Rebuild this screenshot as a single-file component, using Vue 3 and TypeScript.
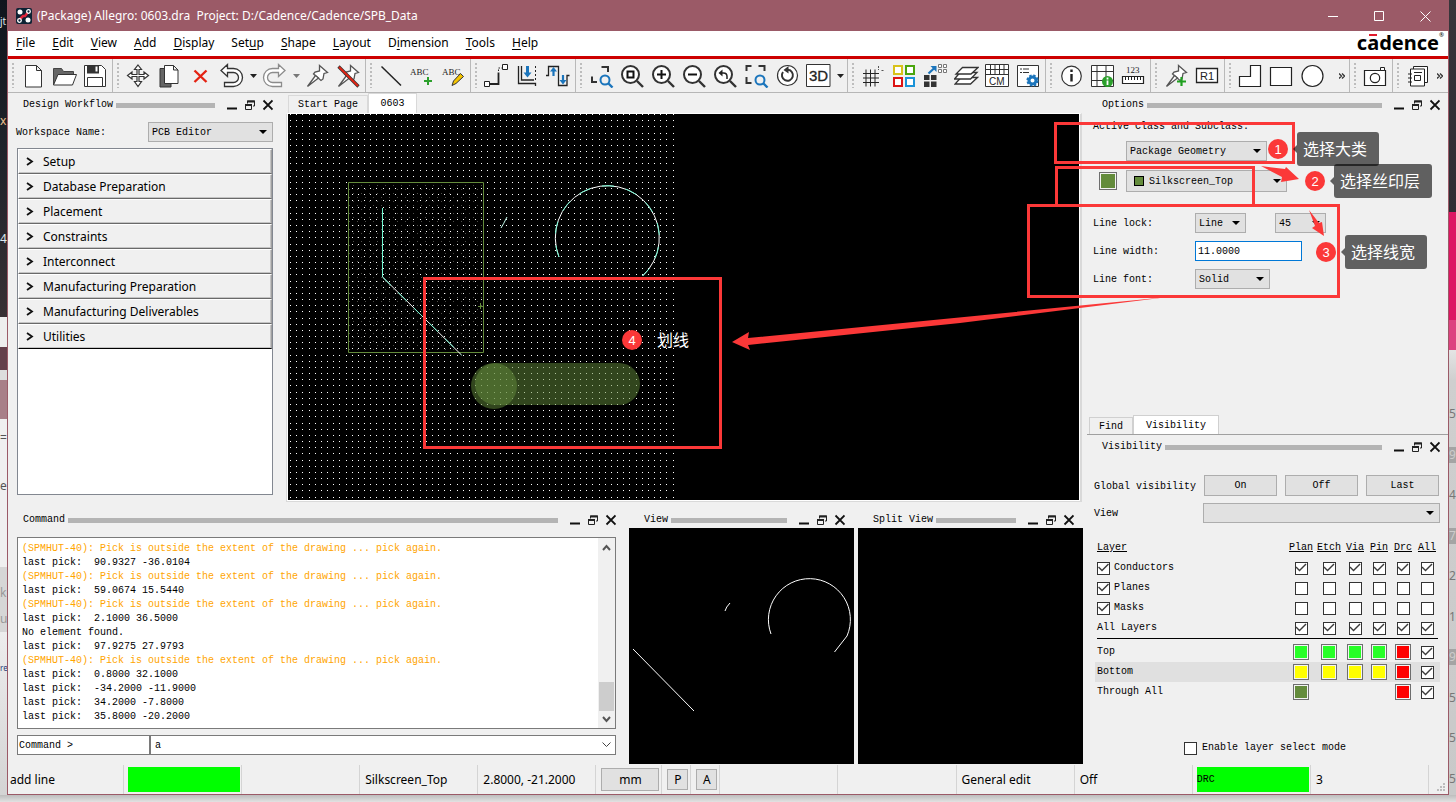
<script setup lang="ts">
import { ref } from 'vue'

interface ToolItem {
  kind: 'icon' | 'drop' | 'more'
  icon?: string
  label: string
}

interface LogLine {
  text: string
  warn?: boolean
}

const icon = (name: string, label: string): ToolItem => ({ kind: 'icon', icon: name, label })
const drop = (label: string): ToolItem => ({ kind: 'drop', label })
const more = (label: string): ToolItem => ({ kind: 'more', label })

const menus = ['File', 'Edit', 'View', 'Add', 'Display', 'Set|up', 'Shape', 'Layout', 'Dimension', 'Tools', 'Help'].map((m) => {
  if (m.includes('|')) {
    const [a, b] = m.split('|')
    return { pre: a, key: b[0], post: b.slice(1) }
  }
  if (m === 'Dimension') return { pre: 'D', key: 'i', post: 'mension' }
  return { pre: '', key: m[0], post: m.slice(1) }
})

const groups: ToolItem[][] = [
  [icon('file', 'New'), icon('open', 'Open'), icon('save', 'Save')],
  [icon('move', 'Move'), icon('copy', 'Copy'), icon('del', 'Delete'), icon('undo', 'Undo'), drop('Undo list'), icon('redo', 'Redo'), drop('Redo list'), icon('pin', 'Fix'), icon('unpin', 'Unfix')],
  [icon('line', 'Add line'), icon('text', 'Add text'), icon('editText', 'Edit text')],
  [icon('route', 'Connect'), icon('slide', 'Slide'), icon('delay', 'Delay tune')],
  [icon('zoomWin', 'Zoom by points'), icon('zoomFit', 'Zoom fit'), icon('zoomIn', 'Zoom in'), icon('zoomOut', 'Zoom out'), icon('zoomPrev', 'Zoom previous'), icon('zoomSel', 'Zoom selection'), icon('refresh', 'Redraw'), icon('threeD', '3D canvas'), drop('3D options')],
  [icon('grid', 'Grid'), icon('colors', 'Color'), icon('shadow', 'Shadow'), icon('layers', 'Cross section'), icon('cm', 'Constraint manager'), icon('prefs', 'Parameters')],
  [icon('info', 'Show element'), icon('report', 'Report'), icon('ruler', 'Measure')],
  [icon('addPin', 'Add pin'), icon('refdes', 'Reference designator')],
  [icon('poly', 'Shape polygon'), icon('rect', 'Rectangle'), icon('circle', 'Circle'), more('More shapes')],
  [icon('camera', 'Snapshot')],
  [icon('docs', 'Documents'), more('More tools')],
]

const lens = (inner: string) =>
  `<circle cx="10.5" cy="11.5" r="8.5" fill="#fff" stroke="#333" stroke-width="2"/><path d="M17 18l6 6" stroke="#333" stroke-width="2.4"/>${inner}`
const pinShape = (c: string) =>
  `<path d="M14.500 2.500l8 7-3.500 1-1 5.500-2 1.500-7.500-6.500 1.500-2 4.500-1z" fill="#fff" stroke="${c}" stroke-width="1.300"/><path d="M2.500 23.500l8-11 3 2.500z" stroke="${c}" stroke-width="1.300" fill="#fff"/>`
const blueLens =
  '<circle cx="16" cy="17" r="4.500" fill="none" stroke="#1b75bc" stroke-width="2"/><path d="M19.500 20.500l4 4" stroke="#1b75bc" stroke-width="2.400"/>'

const icons: Record<string, string> = {
  file: '<path d="M4.500 2.500h11l5 5v16.500h-16zM15.500 2.500v5h5" fill="#fff" stroke="#333"/>',
  open: '<path d="M1.500 22V5.500h8l2 3h10V13" fill="#666" stroke="#444"/><path d="M6 11.500h18.500l-4 10.500H1.500z" fill="#fff" stroke="#333"/>',
  save: '<path d="M1.500 2.500h17l4 4V23.500h-21z" fill="#fff" stroke="#333"/><path d="M4 2.500h12v8H4z" fill="#333"/><path d="M12.500 3.500h2v5h-2z" fill="#fff"/><path d="M4.500 14.500h15v9h-15z" fill="#fff" stroke="#333"/>',
  move: '<path d="M12 2l3.500 4.500h-2.500v5h5V9l4.500 3.500L18 16v-2.500h-5v5h2.500L12 23.500 8.500 18.500H11v-5H6V16l-4.500-3.500L6 9v2.500h5v-5H8.500z" fill="#fff" stroke="#333" stroke-width="1.200"/>',
  copy: '<path d="M3 5.500h11V24H3z" fill="#666" stroke="#333"/><path d="M7.500 2.500h9l4.500 4.500v13.500H7.500zM16.500 2.500V7H21" fill="#fff" stroke="#333"/>',
  del: '<path d="M6.500 7.500l12 11.500M18.500 7.500l-12 11.500" stroke="#e42313" stroke-width="2.400"/>',
  undo: '<path d="M8.500 1.500v4h6a8.700 8.700 0 0 1 0 18H5.500v-4h9a4.900 4.900 0 0 0 0-10h-6v4L2 7.500z" fill="#fff" stroke="#333" stroke-width="1.300"/>',
  redo: '<path d="M16.500 1.500v4h-6a8.700 8.700 0 0 0 0 18h9v-4h-9a4.900 4.900 0 0 1 0-10h6v4L23 7.500z" fill="#fff" stroke="#8c8c8c" stroke-width="1.300"/>',
  pin: pinShape('#555'),
  unpin: pinShape('#555') + '<path d="M2.500 3.500l20 20" stroke="#333" stroke-width="3.200"/><path d="M3 4l19 19" stroke="#e42313" stroke-width="1.800"/>',
  line: '<path d="M2.500 3.500l19.500 19" stroke="#222" stroke-width="1.500"/>',
  text: '<text x="0" y="12" font-family="Liberation Serif" font-size="9" fill="#222">ABC</text><path d="M18 14v8M14 18h8" stroke="#2ca02c" stroke-width="2"/>',
  editText: '<text x="1" y="12" font-family="Liberation Serif" font-size="9" fill="#222">ABC</text><path d="M11 22.500l1.500-4.500 7-7.500 3 3-7.500 7z" fill="#f5c400" stroke="#333"/>',
  route: '<path d="M.5 18.500h5v5h-5zM18.500 1.500h5v5h-5z" fill="#fff" stroke="#222"/><path d="M6 21h8.500V9.500" fill="none" stroke="#222" stroke-width="1.800"/><path d="M14.500 8V5H18" fill="none" stroke="#222" stroke-dasharray="1.500 1.500"/>',
  slide: '<path d="M3.500 3v17.500h17V23M6.500 3v14H19" fill="none" stroke="#222" stroke-width="1.300"/><path d="M20.500 3v15" stroke="#222" stroke-dasharray="2 2"/><path d="M12.500 3v8" stroke="#1b75bc" stroke-width="3"/><path d="M8.500 9.500h8l-4 5z" fill="#1b75bc"/>',
  delay: '<path d="M0 12.500h2.500v-9h10v19h8.500v-10h2.500" fill="none" stroke="#222" stroke-width="1.300"/><path d="M7.500 7v6M17 12v6" stroke="#1b75bc" stroke-width="2.200"/><path d="M4 8.500h7L7.500 4zM13.500 17h7L17 21.500z" fill="#1b75bc"/>',
  zoomWin: '<path d="M12.500 4H19v5M3 13.500V19h5" fill="none" stroke="#333" stroke-width="2"/>' + blueLens,
  zoomFit: lens('<path d="M7.500 8.500h6v6h-6z" fill="none" stroke="#111" stroke-width="2"/>'),
  zoomIn: lens('<path d="M10.500 7v9M6 11.500h9" stroke="#111" stroke-width="2"/>'),
  zoomOut: lens('<path d="M6 11.500h9" stroke="#111" stroke-width="2"/>'),
  zoomPrev: lens('<path d="M14 16v-2.500c0-2.500-1-3.500-3.500-3.500H8" fill="none" stroke="#222" stroke-width="1.500"/><path d="M9.500 6.500v7L5.500 10z" fill="#222"/>'),
  zoomSel: '<path d="M2.500 8V3h5M14.500 3h6v5M2.500 14v6h5" fill="none" stroke="#333" stroke-width="2"/>' + blueLens,
  refresh: '<circle cx="12.500" cy="12.500" r="10" fill="#fff" stroke="#333" stroke-width="1.200"/><path d="M8 9a5.500 5.500 0 1 0 5-2.200" fill="none" stroke="#333" stroke-width="2"/><path d="M13.500 3v7.500L8.500 7z" fill="#333"/>',
  threeD: '<path d="M.5 1.500h23.500v22H.5z" fill="#fff" stroke="#333"/><text x="3" y="18" font-family="Liberation Sans" font-size="15" fill="#222" stroke="#222" stroke-width=".300">3D</text>',
  grid: '<path d="M5 6.500v17M9.500 6.500v17M14 6.500v17M2 10.500h16M2 15h16M2 19.500h16" stroke="#222"/><path d="M17.500 3v4M20.500 7.500h3" stroke="#555" stroke-dasharray="2 1"/>',
  colors: '<g fill="#fff" stroke-width="2"><path d="M2 3h8v8H2z" stroke="#d8c21a"/><path d="M14 3h8v8h-8z" stroke="#4aa50d"/><path d="M2 15h8v8H2z" stroke="#dc1414"/><path d="M14 15h8v8h-8z" stroke="#1a93d8"/></g>',
  shadow: '<path d="M1 12h5.500v5H1zM8 12h5.500v5H8zM1 18.500h5.500v5.500H1zM8 18.500h5.500v5.500H8z" fill="#333"/><path d="M5.500 10.500l7-6.500" stroke="#1b75bc" stroke-width="2.200"/><path d="M7.500 3h6v6z" fill="#1b75bc"/><path d="M15.500 1.500h3v3h-3zM20.500 1.500h3v3h-3zM15.500 6.500h3v3h-3zM20.500 6.500h3v3h-3z" fill="#fff" stroke="#777"/>',
  layers: '<path d="M7 14.500h16.500l-7 6.500H1z" fill="#fff" stroke="#333" stroke-width="1.300"/><path d="M6 9.500h17l-6.500 6.500H.5z" fill="#fff" stroke="#333" stroke-width="1.300"/><path d="M8.500 4.500h15.500l-7 6.500H2z" fill="#fff" stroke="#333" stroke-width="1.300"/>',
  cm: '<path d="M.5 1.500h23v22H.5z" fill="#fff" stroke="#333"/><path d="M.5 6.500h23M.5 11.500h23M5.500 1.500v10M10 1.500v10M14.500 1.500v10M19 1.500v10" stroke="#333"/><text x="4" y="21.500" font-family="Liberation Sans" font-size="10" fill="#222">CM</text>',
  prefs: '<path d="M1.500 2.500h21v21h-21z" fill="#fff" stroke="#333"/><path d="M4 6h2M7 6h6M4 9.500h2M7 9.500h6" stroke="#333"/><circle cx="16.500" cy="17.500" r="3.500" fill="none" stroke="#1b75bc" stroke-width="3"/><circle cx="16.500" cy="17.500" r="5.200" fill="none" stroke="#1b75bc" stroke-width="1.800" stroke-dasharray="2.400 1.700"/>',
  info: '<circle cx="12.500" cy="13" r="9.800" fill="#fff" stroke="#333" stroke-width="1.200"/><path d="M12.500 11v7.500M12.500 6.500v2.500" stroke="#222" stroke-width="2.400"/>',
  report: '<path d="M1.500 2.500h22v21h-22z" fill="#fff" stroke="#333"/><path d="M1.500 8.500h22M1.500 17.500h22M7 2.500v21M16 2.500v21" stroke="#333"/><circle cx="17.500" cy="18.500" r="5.500" fill="#2ca02c"/><path d="M17.500 17.500v4.500M17.500 14.500v2" stroke="#fff" stroke-width="1.800"/>',
  ruler: '<text x="5" y="10" font-family="Liberation Serif" font-size="9" fill="#222">123</text><path d="M1.500 13.500h21v7h-21z" fill="#fff" stroke="#222" stroke-width="1.200"/><path d="M4.500 14v3M7.500 14v3M10.500 14v3M13.500 14v3M16.500 14v3M19.500 14v3" stroke="#222"/>',
  addPin: pinShape('#555') + '<path d="M17.500 14v9M13 18.500h9" stroke="#1fa01f" stroke-width="2.200"/>',
  refdes: '<path d="M1.500 5.500h21v14h-21z" fill="#fff" stroke="#222" stroke-width="1.300"/><text x="5" y="17" font-family="Liberation Sans" font-size="11" fill="#222">R1</text>',
  poly: '<path d="M1.500 13.500h11v-11h10v21h-21z" fill="#fff" stroke="#222" stroke-width="1.200"/>',
  rect: '<path d="M1.500 4.500h21v18h-21z" fill="#fff" stroke="#222" stroke-width="1.200"/>',
  circle: '<circle cx="12.500" cy="13" r="10.500" fill="#fff" stroke="#222" stroke-width="1.200"/>',
  camera: '<path d="M1.500 7.500h21v15h-21z" fill="#fff" stroke="#222" stroke-width="1.200"/><path d="M17.500 4.500h4v3h-4z" fill="#fff" stroke="#222"/><circle cx="12" cy="15" r="4.700" fill="#fff" stroke="#222" stroke-width="1.200"/>',
  docs: '<path d="M7.500 3.500h14v16h-14z" fill="#fff" stroke="#222"/><path d="M4.500 6h14v17h-14z" fill="#fff" stroke="#222"/><path d="M8.500 12.500h6v5h-6zM2 11h4M2 15h4M2 19h4M8 9.500h8" fill="none" stroke="#222"/>',
}

const workflow = ['Setup', 'Database Preparation', 'Placement', 'Constraints', 'Interconnect', 'Manufacturing Preparation', 'Manufacturing Deliverables', 'Utilities']

const outside: LogLine = { text: '(SPMHUT-40): Pick is outside the extent of the drawing ... pick again.', warn: true }
const log: LogLine[] = [
  outside,
  { text: 'last pick:  90.9327 -36.0104' },
  outside,
  { text: 'last pick:  59.0674 15.5440' },
  outside,
  { text: 'last pick:  2.1000 36.5000' },
  { text: 'No element found.' },
  { text: 'last pick:  97.9275 27.9793' },
  outside,
  { text: 'last pick:  0.8000 32.1000' },
  { text: 'last pick:  -34.2000 -11.9000' },
  { text: 'last pick:  34.2000 -7.8000' },
  { text: 'last pick:  35.8000 -20.2000' },
]

const layerCols = ['Plan', 'Etch', 'Via', 'Pin', 'Drc', 'All']
const toggles = ref([
  { name: 'Conductors', hasOwn: true, own: true, on: true },
  { name: 'Planes', hasOwn: true, own: true, on: false },
  { name: 'Masks', hasOwn: true, own: true, on: false },
  { name: 'All Layers', hasOwn: false, own: false, on: true },
])
const layers = [
  { name: 'Top', colors: ['#26ff26', '#26ff26', '#26ff26', '#26ff26', '#ff0000'] },
  { name: 'Bottom', colors: ['#ffff00', '#ffff00', '#ffff00', '#ffff00', '#ff0000'] },
  { name: 'Through All', colors: ['#648c3c', '', '', '', '#ff0000'] },
]

const commandText = ref('a')
const lineWidth = ref('11.0000')

const pitch = 6.17
const dots = Array.from({ length: 63 }, (_, r) =>
  Array.from({ length: 63 }, (_, c) => `M${Math.round(2 + c * pitch)} ${Math.round(pitch * r) + 0.5}h1`).join(''),
).join('')
</script>

<template>
  <div class="desktop">
    <div class="edge edge-left" aria-hidden="true">
      <div class="l-dark"><span class="s1">jt</span><span class="s2">x</span><span class="s3">4</span></div>
      <div class="l-gap"></div>
      <div class="l-wine"></div>
      <div class="l-line"></div>
      <div class="l-rose"></div>
      <div class="l-page"><span>=</span><span>e</span></div>
      <div class="l-grey"><span>k</span><span>u</span></div>
      <div class="l-tail"><span>re</span></div>
    </div>

    <div class="window">
      <header class="titlebar">
        <svg class="app-icon" width="16" height="16" viewBox="0 0 16 16">
          <rect width="16" height="16" rx="2" fill="#0d2233" />
          <path d="M2 13L7 8l2 0 4-5" stroke="#e0243a" stroke-width="2.500" fill="none" />
          <circle cx="4" cy="4" r="2.500" fill="#fff" />
          <circle cx="12" cy="12" r="2.500" fill="#fff" />
          <circle cx="12.500" cy="3.500" r="1.800" fill="#0d2233" stroke="#fff" stroke-width="1.300" />
          <circle cx="3.500" cy="12.500" r="1.800" fill="#0d2233" stroke="#fff" stroke-width="1.300" />
        </svg>
        <h1>(Package) Allegro: 0603.dra&nbsp; Project: D:/Cadence/Cadence/SPB_Data</h1>
        <button aria-label="Minimize"><svg width="11" height="11"><path d="M0 5.500h10" stroke="#fff" /></svg></button>
        <button aria-label="Maximize"><svg width="11" height="11"><path d="M.5.5h9v9h-9z" stroke="#fff" fill="none" /></svg></button>
        <button aria-label="Close"><svg width="11" height="11"><path d="M.5.5l10 10M10.500.5l-10 10" stroke="#fff" /></svg></button>
      </header>

      <nav class="menubar">
        <button v-for="m in menus" :key="m.key + m.post">{{ m.pre }}<u>{{ m.key }}</u>{{ m.post }}</button>
        <div class="brand">c<span class="macron">a</span>dence<sup>®</sup></div>
      </nav>

      <div class="toolbar">
        <div v-for="(g, gi) in groups" :key="gi" class="tool-group">
          <span class="handle"></span>
          <button v-for="t in g" :key="t.label" :class="t.kind" :aria-label="t.label">
            <svg v-if="t.kind === 'icon'" width="25" height="25" viewBox="0 0 25 25" fill="none" v-html="icons[t.icon!]"></svg>
            <svg v-else-if="t.kind === 'drop'" width="7" height="4"><path d="M0 0h7L3.500 4z" :fill="t.label === 'Redo list' ? '#777' : '#222'" /></svg>
            <svg v-else width="6" height="6"><path d="M0 .5L2.500 3 0 5.500M3 .5L5.500 3 3 5.500" fill="none" stroke="#333" stroke-width="1.300" /></svg>
          </button>
        </div>
      </div>

      <main class="body">
        <div class="main-area">
          <div class="upper">
            <section class="workflow">
              <div class="dock-title"><span>Design Workflow</span><i></i><svg width="46" height="12"><use href="#dock-buttons" /></svg></div>
              <div class="ws-row">
                <label for="ws">Workspace Name:</label>
                <span class="select ws-select"><select id="ws"><option>PCB Editor</option></select></span>
              </div>
              <div class="wf-list">
                <button v-for="w in workflow" :key="w">
                  <svg width="8" height="9"><path d="M1 1l5 3.500L1 8" fill="none" stroke="#111" stroke-width="1.800" /></svg>{{ w }}
                </button>
              </div>
            </section>

            <section class="editor">
              <div class="tabs">
                <button>Start Page</button>
                <button class="active">0603</button>
              </div>
              <div class="canvas-frame">
                <svg class="canvas" width="100%" height="100%">
                  <defs>
                    <pattern id="stipple" width="8" height="8" patternUnits="userSpaceOnUse">
                      <path d="M1 1.500h1M5 5.500h1" stroke="#4c4c48" />
                    </pattern>
                  </defs>
                  <path :d="dots" stroke="#fff" />
                  <g transform="translate(-288 -114)" fill="none">
                    <path d="M348.500 182.500h135v170h-135z" fill="url(#stipple)" stroke="#648c3c" />
                    <path d="M382.500 208v69" stroke="#6ff5cf" />
                    <path d="M382.500 277l79 78" stroke="#fff" />
                    <path d="M382.500 277l79 78" stroke="#6ff5cf" stroke-dasharray="12 10" />
                    <path d="M559 257A52 52 0 1 1 642.500 276" stroke="#fff" />
                    <path d="M559 257A52 52 0 1 1 642.500 276" stroke="#6ff5cf" stroke-dasharray="12 12" />
                    <path d="M501 228q2-3 6-11" stroke="#c8fff0" />
                    <path d="M480.500 303v6M478 306.500h6" stroke="#648c3c" />
                    <rect x="475" y="363" width="165" height="42" rx="21" fill="#648c3c" fill-opacity=".5" />
                    <circle cx="494" cy="386" r="23" fill="#648c3c" fill-opacity=".5" />
                    <rect x="424.500" y="278.500" width="296" height="169" stroke="#fb3838" stroke-width="3" />
                  </g>
                  <g transform="translate(-288 -114)">
                    <circle cx="632" cy="340" r="10" fill="#fb3838" />
                    <text class="num" x="632" y="345">4</text>
                    <text class="note" x="657" y="346">划线</text>
                  </g>
                </svg>
              </div>
            </section>
          </div>

          <div class="lower">
            <section class="command">
              <div class="dock-title"><span>Command</span><i></i><svg width="46" height="12"><use href="#dock-buttons" /></svg></div>
              <div class="log">
                <div class="log-text">
                  <p v-for="(l, i) in log" :key="i" :class="{ warn: l.warn }">{{ l.text }}</p>
                </div>
                <div class="scroll">
                  <svg width="9" height="7"><path d="M1 6l3.500-4L8 6" fill="none" stroke="#555" stroke-width="2" /></svg>
                  <span></span>
                  <svg width="9" height="7"><path d="M1 1l3.500 4L8 1" fill="none" stroke="#555" stroke-width="2" /></svg>
                </div>
              </div>
              <div class="prompt">
                <label for="cmd">Command &gt;</label>
                <input id="cmd" v-model="commandText" />
                <svg width="9" height="6"><path d="M.5.5l4 4 4-4" fill="none" stroke="#444" /></svg>
              </div>
            </section>
            <section class="view">
              <div class="dock-title"><span>View</span><i></i><svg width="46" height="12"><use href="#dock-buttons" /></svg></div>
              <div class="screen">
                <svg width="225" height="236" fill="none" stroke="#fff">
                  <g transform="translate(-629 -528)">
                    <path d="M633 649l61 62M725 611q1-4 5-8" />
                    <path d="M771 634A41 41 0 1 1 847 636L834.500 652" />
                  </g>
                </svg>
              </div>
            </section>
            <section class="view">
              <div class="dock-title"><span>Split View</span><i></i><svg width="46" height="12"><use href="#dock-buttons" /></svg></div>
              <div class="screen"></div>
            </section>
          </div>
        </div>

        <aside class="side">
          <section class="options">
            <div class="dock-title"><span>Options</span><i></i><svg width="46" height="12"><use href="#dock-buttons" /></svg></div>
            <p class="opt-head">Active Class and Subclass:</p>
            <span class="select cls"><select aria-label="Class"><option>Package Geometry</option></select></span>
            <div class="sub-row">
              <button class="swatch big" aria-label="Layer color" :style="{ backgroundColor: '#648c3c' }"></button>
              <span class="select sub"><b class="chip"></b><select aria-label="Subclass"><option>Silkscreen_Top</option></select></span>
            </div>
            <div class="form">
              <label for="lock">Line lock:</label>
              <div class="pair">
                <span class="select w51"><select id="lock"><option>Line</option></select></span>
                <span class="select w51"><select aria-label="Angle"><option>45</option></select></span>
              </div>
              <label for="lw">Line width:</label>
              <input id="lw" v-model="lineWidth" />
              <label for="lf">Line font:</label>
              <span class="select w75"><select id="lf"><option>Solid</option></select></span>
            </div>
          </section>

          <div class="side-tabs">
            <button>Find</button>
            <button class="active">Visibility</button>
          </div>

          <section class="visibility">
            <div class="dock-title"><span>Visibility</span><i></i><svg width="46" height="12"><use href="#dock-buttons" /></svg></div>
            <div class="global">
              <span>Global visibility</span>
              <button>On</button><button>Off</button><button>Last</button>
            </div>
            <div class="view-row">
              <label for="vw">View</label>
              <span class="select"><select id="vw"><option></option></select></span>
            </div>
            <table>
              <colgroup><col /><col class="c28" /><col class="c28" /><col class="c24" /><col class="c24" /><col class="c24" /><col class="c24" /><col class="c1" /></colgroup>
              <thead>
                <tr><th class="name"><u>Layer</u></th><th v-for="c in layerCols" :key="c"><u>{{ c }}</u></th><th></th></tr>
              </thead>
              <tbody>
                <tr v-for="t in toggles" :key="t.name">
                  <td class="name">
                    <label v-if="t.hasOwn"><input v-model="t.own" type="checkbox" />{{ t.name }}</label>
                    <template v-else>{{ t.name }}</template>
                  </td>
                  <td v-for="c in layerCols" :key="c"><input type="checkbox" :checked="t.on" :aria-label="t.name + ' ' + c" /></td>
                  <td></td>
                </tr>
              </tbody>
              <tbody>
                <tr class="rule"><td colspan="8"><hr /></td></tr>
                <tr v-for="l in layers" :key="l.name" :class="{ hot: l.name === 'Bottom' }">
                  <td class="name">{{ l.name }}</td>
                  <td v-for="(c, i) in l.colors" :key="i">
                    <button v-if="c" class="swatch" :aria-label="l.name + ' ' + layerCols[i]" :style="{ backgroundColor: c }"></button>
                  </td>
                  <td><input type="checkbox" checked :aria-label="l.name + ' All'" /></td>
                  <td></td>
                </tr>
              </tbody>
            </table>
            <label class="enable"><input type="checkbox" />Enable layer select mode</label>
          </section>

          <svg class="notes" width="361" height="300">
            <g transform="translate(-1087 -93)">
              <g fill="none" stroke="#fb3838" stroke-width="3">
                <rect x="1055.500" y="123.500" width="238" height="39" />
                <rect x="1056.500" y="167.500" width="197" height="38" />
                <rect x="1028.500" y="205.500" width="310" height="91" />
              </g>
              <g fill="#fb3838">
                <path d="M1261 166l24 3 1-2 13 12-18 3 1-5z" />
                <path d="M1309 210l10 13 3-1 2 14-12-8 3-2z" />
                <path d="M1168 297L748 338l1-6-17 10 18 8-2-5 212-22z" />
                <circle cx="1278" cy="149" r="10" />
                <circle cx="1315" cy="181" r="10" />
                <circle cx="1326" cy="252" r="10" />
              </g>
              <g fill="#000" fill-opacity=".6">
                <path d="M1300 132h76a3 3 0 0 1 3 3v28a3 3 0 0 1-3 3h-76a3 3 0 0 1-3-3v-10l-4-4 4-4v-10a3 3 0 0 1 3-3z" />
                <path d="M1337 164h92a3 3 0 0 1 3 3v28a3 3 0 0 1-3 3h-92a3 3 0 0 1-3-3v-10l-4-4 4-4v-10a3 3 0 0 1 3-3z" />
                <path d="M1348 235h76a3 3 0 0 1 3 3v28a3 3 0 0 1-3 3h-76a3 3 0 0 1-3-3v-10l-4-4 4-4v-10a3 3 0 0 1 3-3z" />
              </g>
              <text class="num" x="1278" y="154">1</text>
              <text class="num" x="1315" y="186">2</text>
              <text class="num" x="1326" y="257">3</text>
              <text class="note" x="1303" y="155">选择大类</text>
              <text class="note" x="1340" y="187">选择丝印层</text>
              <text class="note" x="1351" y="258">选择线宽</text>
            </g>
          </svg>
        </aside>
      </main>

      <footer class="status">
        <span>add line</span>
        <span class="fill"><b></b></span>
        <span></span>
        <span>Silkscreen_Top</span>
        <span>2.8000, -21.2000</span>
        <span class="btn"><button class="wide">mm</button></span>
        <span class="btn"><button>P</button></span>
        <span class="btn"><button>A</button></span>
        <span></span>
        <span></span>
        <span>General edit</span>
        <span>Off</span>
        <span class="fill"><b>DRC</b></span>
        <span>3</span>
        <svg class="grip" width="9" height="9" fill="#bdbdbd"><path d="M6 0h2v2H6zM3 3h2v2H3zM6 3h2v2H6zM0 6h2v2H0zM3 6h2v2H3zM6 6h2v2H6z" /></svg>
      </footer>
    </div>

    <div class="edge edge-right" aria-hidden="true">
      <div class="r-dark"></div>
      <div class="r-pink"></div>
      <div class="r-pale"></div>
      <div class="r-page">
        <span>5</span><span class="tag">9</span><span>4</span><span class="tag">7</span><span>2</span><span>1</span><span class="tag">9</span><span>5</span><span>5</span><span>5</span>
      </div>
    </div>

    <svg width="0" height="0" class="defs" aria-hidden="true">
      <symbol id="dock-buttons" viewBox="0 0 46 12" width="46" height="12" fill="none">
        <path d="M0 9.500h10" stroke="#111" stroke-width="2" />
        <path d="M20.500 4.500V2h7v5H26" stroke="#222" stroke-width="1" />
        <path d="M20 2.500h8" stroke="#222" stroke-width="2" />
        <path d="M18.500 5.500h6v5h-6z" stroke="#222" />
        <path d="M18 6h7" stroke="#222" stroke-width="2" />
        <path d="M36.500 1.500l9 9M45.500 1.500l-9 9" stroke="#111" stroke-width="1.800" />
      </symbol>
    </svg>
  </div>
</template>

<style>
html,
body {
  margin: 0;
  background: #dcdcdc;
}
</style>

<style scoped>
* {
  box-sizing: border-box;
}
.desktop {
  display: grid;
  grid-template-columns: 7px minmax(0, 1fr) 7px;
  height: 100vh;
  min-height: 700px;
  padding-bottom: 7px;
  background: linear-gradient(to bottom, #f2f2f2 0 calc(100% - 7px), #bdbdbd calc(100% - 7px), #e2e2e2);
  font: 12px/16px 'Noto Sans', 'Open Sans', sans-serif;
  color: #000;
  overflow: hidden;
}
button,
input,
select {
  font: inherit;
  color: inherit;
  margin: 0;
  padding: 0;
  border: 0;
  border-radius: 0;
  background: none;
}
p,
h1 {
  margin: 0;
}
.defs {
  position: absolute;
}

/* desktop behind the window */
.edge {
  display: flex;
  flex-direction: column;
  overflow: hidden;
  font-size: 12px;
  white-space: nowrap;
}
.edge > div {
  flex: none;
}
.edge-left span {
  display: block;
}
.l-dark {
  height: 317px;
  background: linear-gradient(#10151d, #20242b 50%, #383034);
  color: #dfe8f0;
  padding-top: 13px;
}
.s1 {
  height: 100px;
  font-size: 10px;
}
.s2 {
  height: 118px;
  color: #f0c090;
}
.l-gap {
  height: 30px;
  background: #eee;
}
.l-wine {
  height: 23px;
  background: #64404b;
}
.l-line {
  height: 10px;
  background: #ddd;
}
.l-rose {
  height: 39px;
  background: #a87f88;
}
.l-page {
  height: 148px;
  background: #f0f0f0;
  color: #555;
  display: flex;
  flex-direction: column;
  padding-top: 11px;
  gap: 32px;
}
.l-grey {
  height: 65px;
  background: #d6d6d6;
  color: #999;
  display: flex;
  flex-direction: column;
  padding-top: 18px;
  gap: 10px;
}
.edge > .l-tail {
  flex: 1;
  background: linear-gradient(#ededed, #d4d4d4);
  color: #1d3c78;
  padding-top: 28px;
  font-size: 8px;
}
.r-dark {
  height: 212px;
  background: linear-gradient(#37353a, #2f2c33);
}
.r-pink {
  height: 108px;
  background: #dd1763;
}
.r-pale {
  height: 30px;
  background: #dd4380;
}
.edge > .r-page {
  flex: 1;
  background: linear-gradient(#e4e4e4, #cfcfcf 30px, #c9c9c9);
  color: #777;
  display: flex;
  flex-direction: column;
  justify-content: space-between;
  padding: 56px 0 8px;
}
.tag {
  background: #a4a4a4;
  color: #ccc;
}

.window {
  display: flex;
  flex-direction: column;
  min-width: 0;
  min-height: 0;
  background: #f0f0f0;
  border: solid #9b5a67;
  border-width: 0 1px 1px;
}

/* title and menus */
.titlebar {
  display: flex;
  align-items: center;
  height: 31px;
  flex: none;
  padding-left: 8px;
  background: #9b5a67;
  color: #fff;
}
.titlebar h1 {
  flex: 1;
  margin-left: 5px;
  font-size: 12px;
  font-weight: 400;
  white-space: nowrap;
}
.titlebar button {
  width: 46px;
  height: 30px;
}
.titlebar svg {
  display: inline-block;
  vertical-align: middle;
}
.menubar {
  display: flex;
  align-items: center;
  height: 28px;
  flex: none;
  padding: 0 4px 1px 8px;
  gap: 17px;
  background: #fff;
  border-bottom: 3px solid #cd0000;
}
.menubar u {
  text-underline-offset: 2px;
}
.brand {
  margin-left: auto;
  font-size: 20px;
  line-height: 24px;
  font-weight: 700;
  display: flex;
}
.brand sup {
  font-size: 6px;
  line-height: 8px;
  font-weight: 400;
}
.macron {
  position: relative;
}
.macron::after {
  content: '';
  position: absolute;
  left: 2px;
  top: 3px;
  width: 8px;
  height: 2px;
  background: #e01a2c;
}

/* toolbar */
.toolbar {
  display: flex;
  height: 34px;
  flex: none;
  border-bottom: 1px solid #b6b6b6;
  overflow: hidden;
}
.tool-group {
  display: flex;
  flex: none;
  align-items: center;
  padding-right: 1px;
  border-right: 1px solid #b9b9b9;
}
.tool-group:last-child {
  border-right: 0;
}
.handle {
  width: 10px;
  height: 25px;
  background: repeating-linear-gradient(to bottom, #bdbdbd 0 2px, transparent 2px 4px) 4px 0 / 2px 100% no-repeat;
}
.toolbar button {
  display: flex;
  align-items: center;
  justify-content: center;
  height: 33px;
}
.icon {
  width: 31px;
}
.drop {
  width: 12px;
}
.more {
  width: 20px;
}
.tool-group:nth-child(9) .more {
  padding-left: 8px;
}
.tool-group:last-child .more {
  width: 12px;
}

/* docks */
.body {
  display: flex;
  flex: 1;
  min-height: 0;
  font: 10px/14px 'Liberation Mono', 'Noto Sans CJK SC', monospace;
}
.main-area {
  flex: 1;
  min-width: 0;
  display: flex;
  flex-direction: column;
}
.upper {
  flex: 1;
  min-height: 0;
  display: flex;
}
.dock-title {
  display: flex;
  align-items: center;
  height: 22px;
  flex: none;
  padding: 2px 0 0 15px;
  white-space: nowrap;
}
.dock-title span {
  line-height: 20px;
}
.dock-title i {
  flex: 1;
  height: 5px;
  margin: 1px 12px 0 3px;
  background: #b4b4b4;
}
.dock-title svg {
  flex: none;
}
.select {
  position: relative;
  display: inline-flex;
  height: 20px;
}
.select select {
  appearance: none;
  width: 100%;
  height: 100%;
  padding: 2px 16px 0 3px;
  background: #e1e1e1;
  border: 1px solid #adadad;
}
.select::after {
  content: '';
  position: absolute;
  right: 6px;
  top: 8px;
  border: 4px solid transparent;
  border-top-color: #000;
  border-bottom: 0;
  pointer-events: none;
}
.workflow {
  width: 278px;
  flex: none;
  display: flex;
  flex-direction: column;
  padding: 0 13px 11px 0;
}
.ws-row {
  display: flex;
  align-items: center;
  justify-content: space-between;
  padding: 7px 0 6px 8px;
}
.ws-row label,
.form label,
.view-row label,
.global span {
  padding-top: 2px;
}
.ws-select {
  width: 125px;
}
.wf-list {
  flex: 1;
  min-height: 0;
  margin-left: 9px;
  background: #fff;
  border: 1px solid #828790;
}
.wf-list button {
  display: flex;
  align-items: center;
  gap: 9px;
  width: 100%;
  height: 25px;
  padding-left: 7px;
  background: #f0f0f0;
  border: 1px solid;
  border-color: #fff #a0a0a0 #696969 #fff;
  box-shadow: inset -1px -1px #c4c4c4;
  font: 12px/16px 'Noto Sans', sans-serif;
}
.wf-list button:last-child {
  border-bottom-color: #000;
}
.editor {
  flex: 1;
  min-width: 0;
  display: flex;
  flex-direction: column;
  padding: 0 1px 4px 0;
}
.tabs {
  display: flex;
  align-items: flex-end;
  height: 20px;
  padding-left: 2px;
}
.tabs button {
  width: 80px;
  height: 18px;
  padding-top: 1px;
  border: 1px solid #d9d9d9;
  border-bottom: 0;
}
.tabs .active {
  width: 49px;
  height: 20px;
  background: #fff;
}
.canvas-frame {
  flex: 1;
  min-height: 0;
  padding: 0 1px 1px;
  background: #fff;
  border: 1px solid #d9d9d9;
  border-top-color: #fff;
  border-right-width: 2px;
}
.canvas {
  display: block;
  background: #000;
}
.num {
  font: 13px 'Liberation Sans', sans-serif;
  fill: #fff;
  text-anchor: middle;
}
.note {
  font: 16px 'Noto Sans CJK SC', sans-serif;
  fill: #fff;
}

.lower {
  flex: none;
  display: flex;
  gap: 4px;
  height: 259px;
  padding-bottom: 1px;
}
.lower .dock-title {
  padding-top: 6px;
}
.command {
  flex: 1;
  min-width: 0;
  display: flex;
  flex-direction: column;
  padding: 0 9px 9px 0;
}
.log {
  flex: 1;
  min-height: 0;
  display: flex;
  margin: 9px 0 6px 9px;
  background: #fff;
  border: 1px solid #7a7a7a;
}
.log-text {
  flex: 1;
  min-width: 0;
  padding: 4px 4px 0;
  overflow: hidden;
  white-space: pre;
}
.warn {
  color: #ffa500;
}
.scroll {
  width: 17px;
  display: flex;
  flex-direction: column;
  align-items: center;
  padding: 6px 0 5px;
  background: #f0f0f0;
}
.scroll span {
  width: 15px;
  height: 29px;
  margin: auto 0 5px;
  background: #cdcdcd;
}
.prompt {
  display: flex;
  align-items: center;
  height: 20px;
  margin-left: 9px;
  padding-right: 4px;
  background: #fff;
  border: 1px solid #7a7a7a;
}
.prompt label {
  width: 133px;
  padding: 2px 0 0 1px;
  border-right: 2px solid #7a7a7a;
  line-height: 16px;
}
.prompt input {
  flex: 1;
  min-width: 0;
  padding: 2px 0 0 4px;
  outline: 0;
}
.view {
  width: 225px;
  flex: none;
  display: flex;
  flex-direction: column;
}
.view .dock-title {
  padding-right: 9px;
}
.screen {
  flex: 1;
  min-height: 0;
  background: #000;
  overflow: hidden;
}
.screen svg {
  display: block;
}

/* right column */
.side {
  position: relative;
  width: 365px;
  flex: none;
  display: flex;
  flex-direction: column;
  padding-left: 4px;
}
.side .dock-title {
  padding-right: 8px;
}
.options {
  display: flex;
  flex-direction: column;
  align-items: flex-start;
  flex: 1 1 322px;
  min-height: 210px;
}
.options .dock-title {
  align-self: stretch;
}
.opt-head {
  margin: 5px 0 7px 6px;
}
.cls {
  width: 141px;
  margin-left: 39px;
}
.sub-row {
  display: flex;
  align-items: center;
  gap: 9px;
  margin: 9px 0 21px 12px;
}
.sub {
  width: 161px;
  height: 22px;
}
.sub select {
  padding-left: 22px;
}
.sub::after {
  top: 9px;
}
.chip {
  position: absolute;
  left: 8px;
  top: 6px;
  width: 10px;
  height: 10px;
  background: #648c3c;
  border: 1px solid #000;
}
.form {
  display: grid;
  grid-template-columns: 102px auto;
  align-items: center;
  row-gap: 8px;
  margin-left: 6px;
}
.form input {
  width: 107px;
  height: 20px;
  padding: 1px 0 0 2px;
  background: #fff;
  border: 1px solid #0078d7;
}
.pair {
  display: flex;
  gap: 29px;
}
.w51 {
  width: 51px;
}
.w75 {
  width: 75px;
}
.swatch {
  display: block;
  width: 16px;
  height: 16px;
  margin: 0 auto;
  border: 1px solid #6e6e6e;
  box-shadow: inset 0 0 0 1px #f4f4f4;
}
.swatch.big {
  width: 18px;
  height: 18px;
}
.side-tabs {
  display: flex;
  align-items: flex-end;
  height: 20px;
  flex: none;
  padding-left: 2px;
  border-bottom: 1px solid #a0a0a0;
}
.side-tabs button {
  width: 44px;
  height: 17px;
  padding-top: 1px;
  border: 1px solid #d0d0d0;
  border-bottom: 0;
}
.side-tabs .active {
  width: 86px;
  height: 19px;
  background: #fff;
}
.visibility {
  flex: none;
  height: 330px;
  display: flex;
  flex-direction: column;
}
.global,
.view-row {
  display: flex;
  align-items: center;
  justify-content: flex-end;
  gap: 8px;
  height: 21px;
  margin: 18px 9px 0 7px;
}
.global span {
  flex: 1;
  white-space: nowrap;
}
.global button {
  width: 73px;
  height: 21px;
  padding-top: 1px;
  background: #e1e1e1;
  border: 1px solid #adadad;
}
.view-row {
  margin: 6px 8px 0 7px;
}
.view-row label {
  width: 101px;
}
.view-row .select {
  flex: 1;
}
table {
  table-layout: fixed;
  width: auto;
  margin: 15px 8px 0;
  border-collapse: collapse;
}
.c28 {
  width: 28px;
}
.c24 {
  width: 24px;
}
.c1 {
  width: 1px;
}
th,
td {
  height: 20px;
  padding: 0;
  font-weight: 400;
  text-align: center;
}
.name {
  width: 192px;
  padding-left: 2px;
  text-align: left;
}
.name label {
  display: flex;
  align-items: center;
  gap: 4px;
}
.rule td {
  height: 4px;
}
hr {
  height: 1px;
  margin: 0 2px 3px;
  border: 0;
  background: #000;
}
.hot {
  background: #e0e0e0;
}
input[type='checkbox'] {
  appearance: none;
  display: block;
  width: 13px;
  height: 13px;
  margin: 0 auto;
  background: #fff;
  border: 1px solid #333;
}
.name input[type='checkbox'],
.enable input[type='checkbox'] {
  margin: 0;
}
input[type='checkbox']:checked::before {
  content: '';
  display: block;
  width: 11px;
  height: 11px;
  background: #3c3c3c;
  clip-path: polygon(0 5px, 1px 4px, 4px 7px, 10px 1px, 11px 2px, 4px 9px);
}
.enable {
  display: flex;
  align-items: center;
  gap: 5px;
  margin: auto 0 10px 97px;
}
.notes {
  position: absolute;
  left: 4px;
  top: 0;
  overflow: visible;
  pointer-events: none;
}

/* status bar */
.status {
  flex: none;
  display: grid;
  grid-template-columns: 116px repeat(4, 1fr) 66px 29px 29px repeat(6, 1fr) 19px;
  height: 29px;
}
.status > span {
  display: flex;
  align-items: center;
  padding-left: 5px;
  border-right: 1px solid #d4d4d4;
  white-space: nowrap;
}
.status > span:first-child {
  padding-left: 2px;
}
.fill b {
  width: 112px;
  height: 25px;
  background: #0f0;
  font: 10px/26px 'Liberation Mono', monospace;
}
.status > .fill {
  padding-left: 4px;
}
.status button {
  width: 21px;
  height: 21px;
  background: #e1e1e1;
  border: 1px solid #adadad;
}
.status .wide {
  width: 58px;
  height: 23px;
}
.grip {
  align-self: end;
  margin: 0 0 2px 8px;
}
</style>
